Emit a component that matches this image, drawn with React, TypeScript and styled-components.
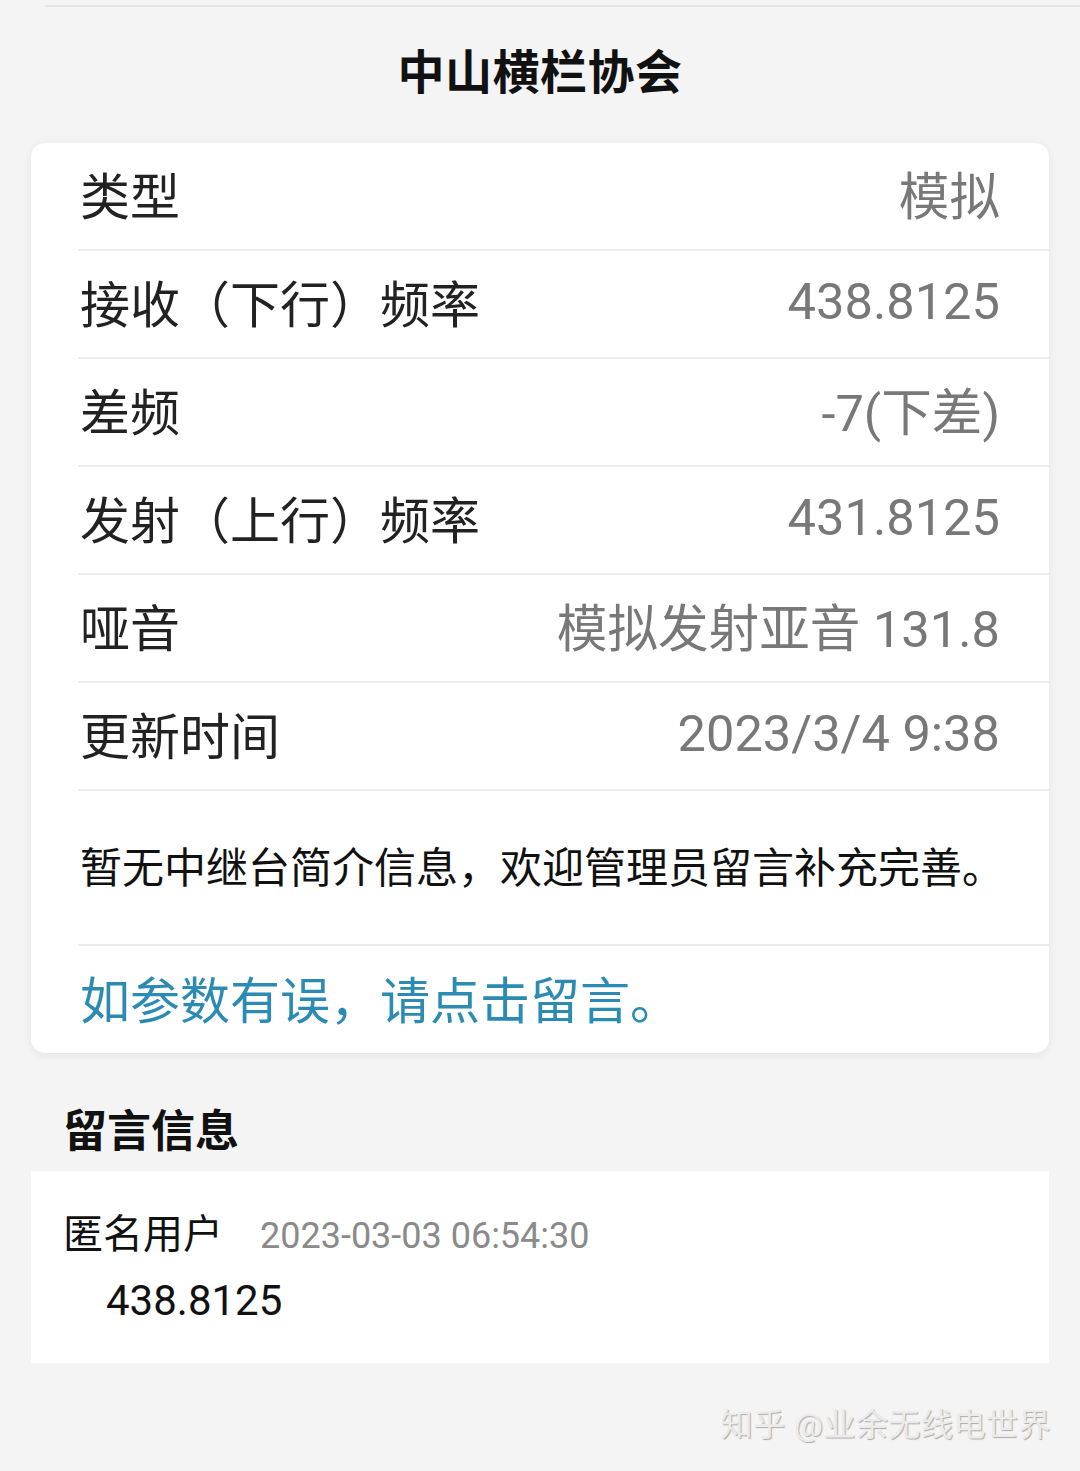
import React from "react";
import styled, { createGlobalStyle } from "styled-components";

const GlobalStyle = createGlobalStyle`
  html, body {
    margin: 0;
    padding: 0;
    background: #f4f4f4;
  }
  body {
    font-family: Roboto, "Noto Sans CJK SC", "Noto Sans", sans-serif;
    color: #1f1f1f;
    text-spacing-trim: space-all;
  }
`;

const Page = styled.div`
  min-height: 1471px;
  background: #f4f4f4;
  overflow: hidden;
`;

const TopRule = styled.div`
  height: 5px;
  margin-left: 45px;
  border-bottom: 2px solid #e4e4e4;
`;

const Title = styled.h1`
  margin: 0;
  height: 136px;
  display: flex;
  align-items: center;
  justify-content: center;
  padding-bottom: 14px;
  box-sizing: border-box;
  font-size: 47px;
  font-weight: 700;
  color: #111;
  letter-spacing: 0.5px;
`;

const Card = styled.section`
  margin: 0 31px;
  background: #fff;
  border-radius: 14px;
  box-shadow: 0 2px 8px rgba(0, 0, 0, 0.07);
  overflow: hidden;
`;

const Row = styled.div<{ $height: number; $last?: boolean }>`
  height: ${(p) => p.$height}px;
  box-sizing: border-box;
  margin-left: 47px;
  padding: 0 49px 6px 2px;
  display: flex;
  align-items: center;
  justify-content: space-between;
  border-bottom: ${(p) => (p.$last ? "none" : "2px solid #ececec")};
`;

const Label = styled.span`
  font-size: 50px;
  color: #222;
  white-space: nowrap;
`;

const Value = styled.span`
  font-size: 50.6px;
  color: #787878;
  white-space: nowrap;
`;

const Description = styled.p`
  margin: 0;
  font-size: 42px;
  color: #111;
  white-space: nowrap;
`;

const Link = styled.a`
  font-size: 50px;
  color: #2b8bb2;
  text-decoration: none;
  cursor: pointer;
`;

const SectionHeading = styled.h2`
  margin: 0;
  padding: 54px 0 0 63px;
  height: 118px;
  box-sizing: border-box;
  font-size: 44px;
  line-height: 50px;
  font-weight: 700;
  color: #111;
`;

const CommentCard = styled.div`
  margin: 0 31px;
  height: 192px;
  box-sizing: border-box;
  background: #fff;
  padding: 31px 32px 0;
`;

const CommentMeta = styled.div`
  display: flex;
  align-items: baseline;
  gap: 37px;
  height: 48px;
`;

const UserName = styled.span`
  font-size: 40px;
  color: #111;
`;

const Timestamp = styled.span`
  font-size: 36px;
  color: #8a8a8a;
`;

const CommentBody = styled.div`
  margin: 26px 0 0 43px;
  font-size: 42px;
  color: #111;
`;

const Watermark = styled.div`
  text-align: right;
  padding: 36px 29px 0 0;
  font-size: 32px;
  color: #ebebeb;
  text-shadow: 1px 1px 1px rgba(0, 0, 0, 0.3);
  letter-spacing: 0.5px;
`;

const rows: { label: string; value: string }[] = [
  { label: "类型", value: "模拟" },
  { label: "接收（下行）频率", value: "438.8125" },
  { label: "差频", value: "-7(下差)" },
  { label: "发射（上行）频率", value: "431.8125" },
  { label: "哑音", value: "模拟发射亚音 131.8" },
  { label: "更新时间", value: "2023/3/4 9:38" },
];

export default function App() {
  return (
    <>
      <GlobalStyle />
      <Page>
        <TopRule />
        <Title>中山横栏协会</Title>
        <Card>
          {rows.map((r) => (
            <Row key={r.label} $height={108}>
              <Label>{r.label}</Label>
              <Value>{r.value}</Value>
            </Row>
          ))}
          <Row $height={155}>
            <Description>暂无中继台简介信息，欢迎管理员留言补充完善。</Description>
          </Row>
          <Row $height={107} $last>
            <Link>如参数有误，请点击留言。</Link>
          </Row>
        </Card>
        <SectionHeading>留言信息</SectionHeading>
        <CommentCard>
          <CommentMeta>
            <UserName>匿名用户</UserName>
            <Timestamp>2023-03-03 06:54:30</Timestamp>
          </CommentMeta>
          <CommentBody>438.8125</CommentBody>
        </CommentCard>
        <Watermark>知乎 @业余无线电世界</Watermark>
      </Page>
    </>
  );
}
